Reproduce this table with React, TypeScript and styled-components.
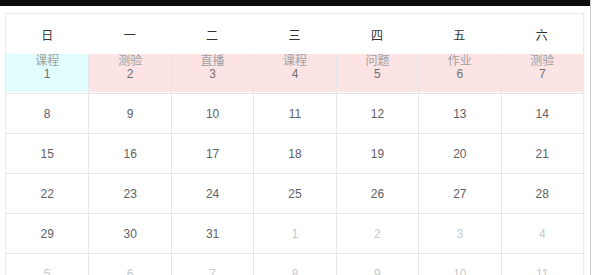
import styled, { createGlobalStyle } from 'styled-components';

const GlobalStyle = createGlobalStyle`
  html, body {
    margin: 0;
    padding: 0;
    background: #fff;
  }
  body {
    font-family: "Liberation Sans", Arial, "Noto Sans CJK SC", sans-serif;
    font-size: 12px;
  }
`;

// 月のデータ
const WEEK_NAMES = ['日', '一', '二', '三', '四', '五', '六'];

type Tone = 'cyan' | 'pink';

interface DayCell {
  day: number;
  other?: boolean;
  event?: string;
  tone?: Tone;
}

const firstWeek: DayCell[] = [
  { day: 1, event: '课程', tone: 'cyan' },
  { day: 2, event: '测验', tone: 'pink' },
  { day: 3, event: '直播', tone: 'pink' },
  { day: 4, event: '课程', tone: 'pink' },
  { day: 5, event: '问题', tone: 'pink' },
  { day: 6, event: '作业', tone: 'pink' },
  { day: 7, event: '测验', tone: 'pink' },
];

const restWeeks: DayCell[][] = [
  [8, 9, 10, 11, 12, 13, 14].map((d) => ({ day: d })),
  [15, 16, 17, 18, 19, 20, 21].map((d) => ({ day: d })),
  [22, 23, 24, 25, 26, 27, 28].map((d) => ({ day: d })),
  [
    { day: 29 },
    { day: 30 },
    { day: 31 },
    { day: 1, other: true },
    { day: 2, other: true },
    { day: 3, other: true },
    { day: 4, other: true },
  ],
  [5, 6, 7, 8, 9, 10, 11].map((d) => ({ day: d, other: true })),
];

const toneColors: Record<Tone, string> = {
  cyan: '#e2fdfd',
  pink: '#fce4e5',
};

const Page = styled.div`
  box-sizing: border-box;
  width: 591px;
  height: 100vh;
  border-right: 1px solid #cfcfcf;
  overflow: hidden;
`;

const TopBar = styled.div`
  height: 6px;
  background: #0b0b0b;
`;

const Card = styled.div`
  margin: 7px 0 0 5px;
  width: 579px;
  box-sizing: border-box;
  border: 1px solid #ebebeb;
  background: #fff;
`;

const HeadRow = styled.div`
  display: grid;
  grid-template-columns: repeat(7, 1fr);
  height: 40px;
`;

const HeadCell = styled.div`
  display: flex;
  align-items: center;
  justify-content: center;
  color: #333;
  font-size: 12px;
`;

const WeekRow = styled.div`
  display: grid;
  grid-template-columns: repeat(7, 1fr);
  border-bottom: 1px solid #e6e6e6;
`;

const Cell = styled.div`
  height: 39px;
  display: flex;
  align-items: center;
  justify-content: center;
  border-left: 1px solid #e6e6e6;

  &:first-child {
    border-left: none;
  }
`;

const DayNum = styled.span<{ $other?: boolean }>`
  font-size: 12px;
  color: ${({ $other }) => ($other ? '#c6c9ce' : '#606266')};
`;

const EventCell = styled.div`
  height: 39px;
  border-left: 1px solid #e6e6e6;

  &:first-child {
    border-left: none;
  }
`;

const EventBox = styled.div<{ $tone: Tone }>`
  height: 38px;
  background: ${({ $tone }) => toneColors[$tone]};
  display: flex;
  flex-direction: column;
  align-items: center;
  padding-top: 1px;
  box-sizing: border-box;
`;

const EventLabel = styled.span`
  font-size: 12px;
  line-height: 13px;
  color: #a0a0a0;
`;

const EventDay = styled.span`
  font-size: 12px;
  line-height: 13px;
  color: #707070;
`;

export default function App() {
  return (
    <>
      <GlobalStyle />
      <Page>
        <TopBar />
        <Card>
          <HeadRow>
            {WEEK_NAMES.map((w) => (
              <HeadCell key={w}>{w}</HeadCell>
            ))}
          </HeadRow>
          <WeekRow>
            {firstWeek.map((c) => (
              <EventCell key={c.day}>
                <EventBox $tone={c.tone ?? 'pink'}>
                  <EventLabel>{c.event}</EventLabel>
                  <EventDay>{c.day}</EventDay>
                </EventBox>
              </EventCell>
            ))}
          </WeekRow>
          {restWeeks.map((week, i) => (
            <WeekRow key={i}>
              {week.map((c, j) => (
                <Cell key={j}>
                  <DayNum $other={c.other}>{c.day}</DayNum>
                </Cell>
              ))}
            </WeekRow>
          ))}
        </Card>
      </Page>
    </>
  );
}
